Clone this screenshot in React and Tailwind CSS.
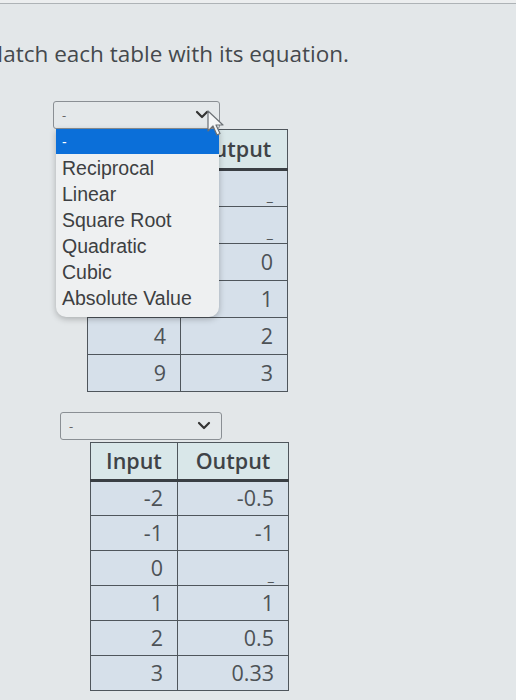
import React from 'react';

const table1 = [
  ['-4', '_'],
  ['-1', '_'],
  ['0', '0'],
  ['1', '1'],
  ['4', '2'],
  ['9', '3'],
];

const table2 = [
  ['-2', '-0.5'],
  ['-1', '-1'],
  ['0', '_'],
  ['1', '1'],
  ['2', '0.5'],
  ['3', '0.33'],
];

const options = ['Reciprocal', 'Linear', 'Square Root', 'Quadratic', 'Cubic', 'Absolute Value'];

function Chevron() {
  return (
    <svg width="14" height="10" viewBox="0 0 14 10" className="text-[#333]">
      <path d="M2 2 L7 7 L12 2" fill="none" stroke="currentColor" strokeWidth="2.2" strokeLinecap="round" strokeLinejoin="round" />
    </svg>
  );
}

function Select({ className }) {
  return (
    <div className={`flex h-[28px] items-center justify-between rounded-[3px] border border-[#8a8f94] bg-[#e4e8ea] pl-[8px] pr-[10px] ${className}`}>
      <span className="text-[13px] leading-none text-[#666]">-</span>
      <Chevron />
    </div>
  );
}

// hidden: how many leading body rows (and header input) sit under the open dropdown
function DataTable({ rows, left, right, headH, rowH, className, hidden = 0 }) {
  return (
    <table className={`border-collapse font-['Open_Sans',sans-serif] text-[21.5px] text-[#4d5256] ${className}`}>
      <thead>
        <tr style={{ height: headH }}>
          <th className="border border-[#4f565c] border-b-[3px] border-b-[#3a3f44] bg-[#d9e7e9] px-[8px] text-center font-semibold text-[#3f4347]" style={{ width: left }}>
            <span className={hidden ? 'invisible' : ''}>Input</span>
          </th>
          <th className="border border-[#4f565c] border-b-[3px] border-b-[#3a3f44] bg-[#d9e7e9] px-[8px] text-center font-semibold text-[#3f4347]" style={{ width: right }}>Output</th>
        </tr>
      </thead>
      <tbody>
        {rows.map(([a, b], i) => (
          <tr key={i} style={{ height: rowH }}>
            <td className="border border-[#4f565c] bg-[#d6e0ea] pr-[14px] text-right">
              <span className={i < hidden ? 'invisible' : ''}>{a}</span>
            </td>
            <td className="border border-[#4f565c] bg-[#d6e0ea] pr-[14px] text-right">
              {b === '_' ? <span className="relative top-[5px] text-[14px]">_</span> : b}
            </td>
          </tr>
        ))}
      </tbody>
    </table>
  );
}

export default function App() {
  return (
    <div className="relative h-[700px] w-[516px] overflow-hidden bg-[#e3e7e9] font-['Open_Sans',sans-serif]">
      <div className="h-[4px] border-b border-[#aeb3b6] bg-[#eceeef]" />

      <h1 className="ml-[-17px] mt-[36px] whitespace-nowrap text-[22.5px] font-normal leading-[28px] text-[#45494d]">
        Match each table with its equation.
      </h1>

      {/* first question */}
      <div className="relative mt-[33px]">
        <Select className="ml-[53px] w-[167px]" />
        <DataTable rows={table1} left={93} right={107} headH={40} rowH={37} hidden={4} className="ml-[87px]" />

        {/* open dropdown */}
        <div className="absolute left-[56px] top-[28px] w-[163px] overflow-hidden rounded-b-[10px] bg-[#eef0f1] pb-[6px] font-['Liberation_Sans',Arial,sans-serif] text-[19.5px] leading-[26px] text-[#3d3f42] shadow-[0_2px_6px_rgba(0,0,0,0.25)]">
          <div className="flex h-[25px] items-center bg-[#0b6fd9] pl-[6px] text-[14px] text-white">-</div>
          <div className="pt-[1px]">
            {options.map((o) => (
              <div key={o} className="whitespace-nowrap pl-[6px]">{o}</div>
            ))}
          </div>
        </div>

        {/* mouse pointer */}
        <svg className="absolute left-[206px] top-[8px]" width="20" height="28" viewBox="0 0 20 28">
          <path d="M2 2 L2 22 L7 17 L11 26 L14 24.5 L10 16 L17 16 Z" fill="#f4f6f7" stroke="#6b7075" strokeWidth="1.2" strokeLinejoin="round" />
        </svg>
      </div>

      {/* second question */}
      <div className="mt-[20px]">
        <Select className="ml-[60px] w-[162px]" />
        <DataTable rows={table2} left={87} right={111} headH={38} rowH={35} className="ml-[90px] mt-[2px]" />
      </div>
    </div>
  );
}
